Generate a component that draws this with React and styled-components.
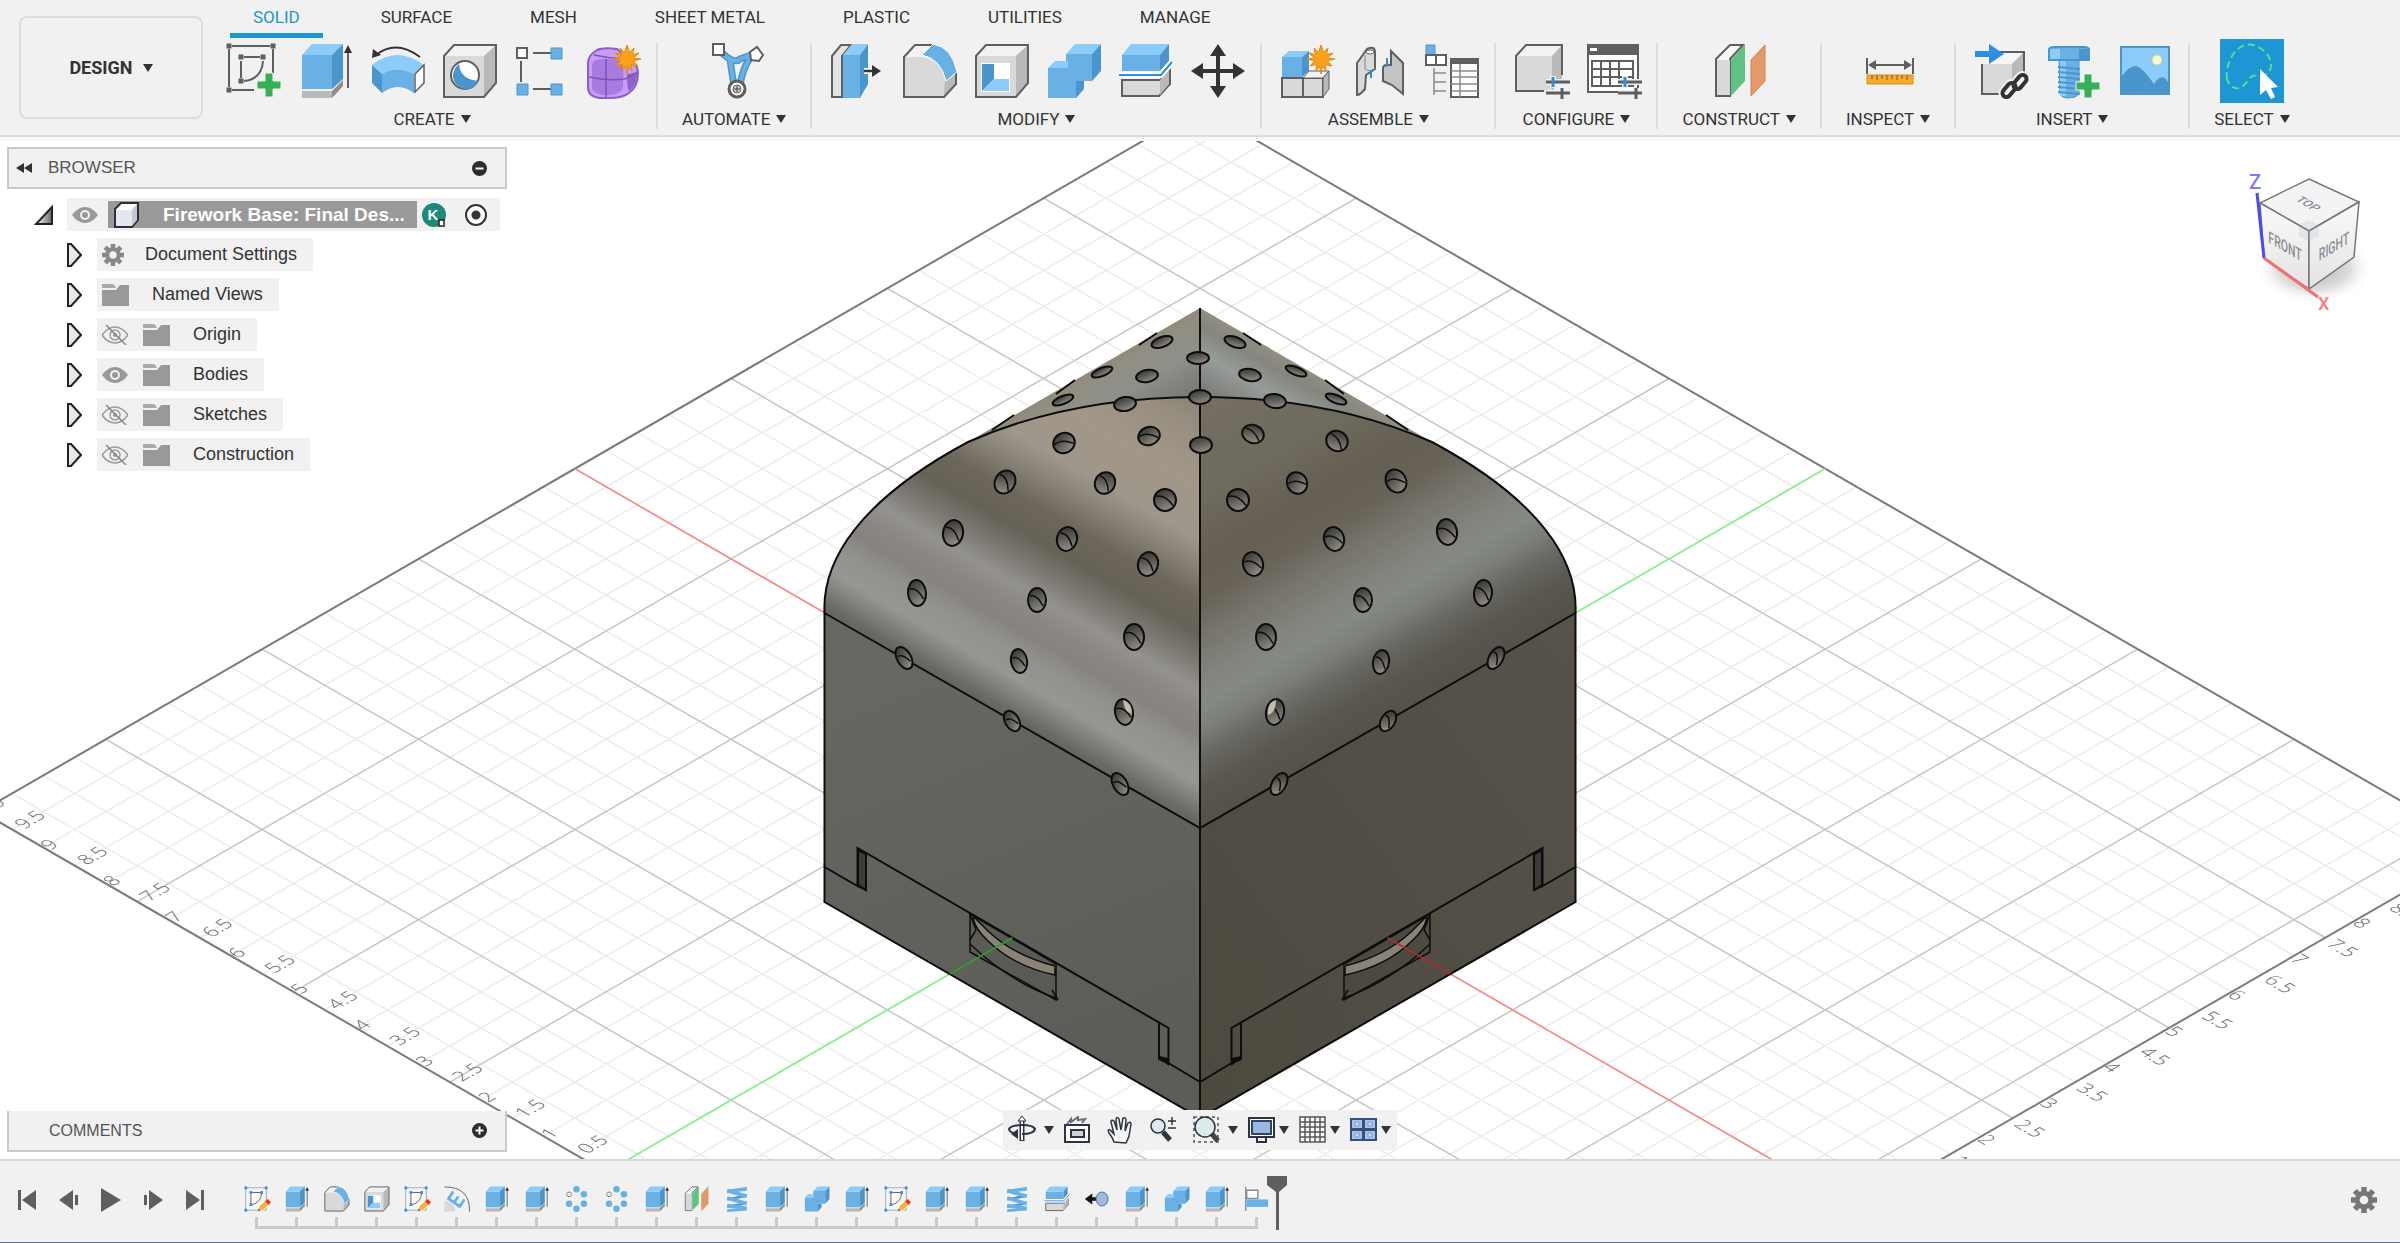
import React from 'react'
import styled, { createGlobalStyle } from 'styled-components'

const GlobalStyle = createGlobalStyle`
  * { box-sizing: border-box; }
  body {
    margin: 0;
    background: #fff;
    color: #333;
    font-family: "Liberation Sans", Arial, sans-serif;
    font-size: 18px;
    overflow: hidden;
  }
  button {
    border: 0;
    padding: 0;
    background: none;
    color: inherit;
    font: inherit;
  }
  svg { display: block; flex: none; }
`

const Page = styled.div`
  display: flex;
  flex-direction: column;
  height: 100vh;
`

/* ---------- toolbar ---------- */

const Header = styled.header`
  display: flex;
  height: 141px;
  flex: none;
  background: #f1f1f1;
  border-bottom: 4px solid #f8f8f8;
  box-shadow: inset 0 -2px #dcdcdc;
  font-family: Roboto, sans-serif;
  font-size: 17px;
  line-height: 20px;
`

const Workspace = styled.button`
  display: flex;
  align-items: center;
  justify-content: center;
  gap: 10px;
  width: 184px;
  height: 103px;
  margin: 16px 0 0 19px;
  border: 2px solid #dcdcdc;
  border-radius: 8px;
  font-size: 18px;
  font-weight: 700;
`

const Ribbon = styled.div`
  flex: 1;
  min-width: 0;
`

const Tabs = styled.nav`
  display: flex;
  gap: 38px;
  height: 43px;
  padding-left: 27px;
`

const Tab = styled.button`
  height: 38px;
  padding: 0 ${(p) => (p.$active ? 23 : 20)}px;
  border-bottom: 5px solid ${(p) => (p.$active ? '#1c97d4' : 'transparent')};
  color: ${(p) => (p.$active ? '#1c97d4' : '#333')};
`

const Groups = styled.div`
  display: flex;
  padding-left: 5px;
`

const Group = styled.section`
  display: flex;
  flex-direction: column;
  align-items: center;
  justify-content: space-between;
  height: 86px;
  padding: 0 16px;
  border-right: 2px solid ${(p) => (p.$last ? 'transparent' : '#dcdcdc')};
`

const Tools = styled.div`
  display: flex;
  gap: 16px;
`

const SelectTool = styled.button`
  margin-top: -4px;
  background: #1c97d4;
`

const GroupLabel = styled.button`
  display: flex;
  align-items: center;
  gap: 6px;
  padding: 0 8px;
`

const Caret = () => (
  <svg width="10" height="8" viewBox="0 0 10 8">
    <path d="M0 0h10L5 8z" fill="#333" />
  </svg>
)

/* ---------- viewport ---------- */

const Viewport = styled.main`
  display: grid;
  flex: 1;
  min-height: 0;
  grid-template: minmax(0, 1fr) / minmax(0, 1fr);
  overflow: hidden;
  > * { grid-area: 1 / 1; }
`

const Canvas = styled.svg`
  width: 100%;
  height: 100%;
`

const BrowserPanel = styled.aside`
  align-self: start;
  width: 500px;
  margin: 6px 0 0 7px;
`

const PanelHead = styled.div`
  display: flex;
  align-items: center;
  height: 42px;
  padding: 0 18px 0 7px;
  border: 2px solid #cacaca;
  background: #f1f1f1;
  color: #555;
  font-size: 17px;
`

const PanelTitle = styled.h2`
  flex: 1;
  margin: 0 0 0 16px;
  font-size: inherit;
  font-weight: 400;
`

const CommentsPanel = styled(PanelHead)`
  align-self: end;
  width: 500px;
  height: 41px;
  margin: 0 0 7px 7px;
  border-top: 0;
  font-size: 16px;
  ${PanelTitle} { margin-left: 33px; }
`

const Tree = styled.ul`
  display: flex;
  flex-direction: column;
  gap: 7px;
  margin: 9px 0 0;
  padding: 0;
  list-style: none;
`

const TreeRow = styled.li`
  display: flex;
  align-items: center;
  gap: ${(p) => (p.$root ? 14 : 15)}px;
  height: 33px;
  padding-left: ${(p) => (p.$root ? 27 : 60)}px;
`

const TreeItem = styled.div`
  display: flex;
  align-items: center;
  gap: 15px;
  height: 33px;
  padding: 0 16px 0 5px;
  background: #f1f1f1;
`

const RootItem = styled(TreeItem)`
  flex: 1;
  gap: 5px;
  margin-right: 7px;
  padding-right: 13px;
`

const TreeText = styled.span`
  padding-left: ${(p) => (p.$folder ? 8 : 6)}px;
`

const RootName = styled.div`
  display: flex;
  align-items: center;
  gap: 24px;
  width: 309px;
  height: 27px;
  margin-left: 5px;
  padding-left: 6px;
  background: #999;
  color: #fff;
  font-size: 19px;
  font-weight: 700;
  white-space: nowrap;
`

const Active = styled.input`
  appearance: none;
  width: 22px;
  height: 22px;
  margin: 0 0 0 auto;
  border: 2px solid #333;
  border-radius: 50%;
  background: radial-gradient(circle, #333 4px, #fff 5px);
`

const NavCube = styled.svg`
  justify-self: end;
  margin: 23px 17px 0 0;
  font-family: Roboto, sans-serif;
`

const NavBar = styled.nav`
  display: flex;
  align-items: center;
  align-self: end;
  justify-self: center;
  gap: 9px;
  height: 40px;
  margin-bottom: 9px;
  padding: 0 6px 0 5px;
  background: #f1f1f1;
`

const NavTool = styled.button`
  display: flex;
  align-items: center;
  gap: ${(p) => (p.$wide ? 8 : 4)}px;
  padding-right: ${(p) => (p.$plain ? 6 : 0)}px;
`

/* ---------- timeline ---------- */

const Timeline = styled.footer`
  display: flex;
  align-items: flex-start;
  flex: none;
  height: 84px;
  border-top: 2px solid #d8d8d8;
  border-bottom: 1px solid #5f7391;
  background: #f1f1f1;
`

const Playback = styled.div`
  display: flex;
  gap: 20px;
  padding: 28px 0 0 16px;
`

const Features = styled.ol`
  display: flex;
  margin: 0;
  padding: 25px 0 0 30px;
  list-style: none;
`

const Feature = styled.li`
  display: flex;
  flex-direction: column;
  align-items: center;
  gap: 5px;
  width: 40px;
`

// the tick under a feature, with the piece of rail that joins it to its neighbours
const Tick = styled.i`
  width: 40px;
  height: 12px;
  background:
    linear-gradient(#c9c9c9, #c9c9c9) center top / 3px 12px no-repeat,
    linear-gradient(#c9c9c9, #c9c9c9) ${(p) => (p.$end === 'first' ? 'right' : 'left')} bottom / ${(p) => (p.$end ? '21px' : '40px')} 3px no-repeat;
`

const Marker = styled.svg`
  margin: 15px 0 0 -10px;
`

const Settings = styled.button`
  margin: 26px 23px 0 auto;
`

/* ---------- icons ---------- */

const B = '#69b1e4'
const BL = '#8bccfa'
const BD = '#4a96cc'
const LINE = { stroke: '#5f5f5f', strokeWidth: 2, fill: 'none' }
const STAR = 'M0-14 2.500-6.500 7-11 5.500-4.500 12-6 6.500-1 14 0 6.500 2 11 7 4.500 5.500 5 12 1.500 7 0 15-1.500 7-5 12-4.500 5.500-11 7-6.500 2-14 0-6.500-1-12-6-5.500-4.500-7-11-2.500-6.500z'

const Star = ({ x, y }) => <path transform={`translate(${x} ${y})`} d={STAR} fill="#f9a11d" stroke="#e08a10" />
const Plus = ({ x, y }) => (
  <path transform={`translate(${x} ${y})`} d="M-4-12h8v8h8v8h-8v8h-8v-8h-8v-8h8z" fill="#34b157" stroke="#f1f1f1" strokeWidth="1" />
)
const Handle = ({ x, y, fill = '#5f5f5f', s = 5 }) => <rect x={x - s / 2} y={y - s / 2} width={s} height={s} fill={fill} />

const GreyBox = () => (
  <>
    <path d="M2 13 12 2h42v38L42 54H2z" fill="#d9d9d9" />
    <path d="M2 13 12 2h42L42 13z" fill="#f2f2f2" />
    <path d="M42 13 54 2v38L42 54z" fill="#b9b9b9" />
    <path d="M2 13 12 2h42v38L42 54H2z" {...LINE} />
  </>
)

const icons = {
  sketch: (
    <>
      <path d="M6 3h38M3 6v38M6 47h22M47 6v24" {...LINE} />
      <path d="M15 18v17M18 14h16M37 18q-1 18-19 20" {...LINE} />
      <Handle x={3} y={3} /><Handle x={47} y={3} /><Handle x={3} y={47} />
      <Handle x={15} y={14} /><Handle x={37} y={14} /><Handle x={15} y={38} />
      <Plus x={43} y={42} />
    </>
  ),
  sketchEdit: (
    <>
      <path d="M4 4h44v48H4z" fill="#f8f8f8" stroke="#a0a0a0" strokeWidth="2" />
      <path d="M15 18v20M18 14h18M38 16q-2 20-20 24" {...LINE} />
      <Handle x={4} y={4} fill="#2c8fe0" s={6} /><Handle x={48} y={4} fill="#2c8fe0" s={6} /><Handle x={4} y={52} fill="#2c8fe0" s={6} />
      <Handle x={15} y={14} fill="#2c8fe0" s={6} /><Handle x={38} y={14} fill="#2c8fe0" s={6} /><Handle x={15} y={40} fill="#2c8fe0" s={6} />
      <path d="m29 55 4-12 13-12 9 9-13 12z" fill="#f7b13c" stroke="#fff" strokeWidth="2" />
      <path d="m29 55 2-7 5 5z" fill="#777" /><path d="m46 33 5-5 7 7-5 6z" fill="#ee2b2b" />
    </>
  ),
  extrude: (
    <>
      <path d="M4 48h30v7H4z" fill="#b9b9b9" /><path d="m34 48 11-11v6L34 55z" fill="#8d8d8d" />
      <path d="M4 12h30v34H4z" fill={B} />
      <path d="M4 12 14 1h31L34 12z" fill={BL} />
      <path d="M34 12 45 1v35L34 46z" fill={BD} />
      <path d="M50 6v39" stroke="#333" strokeWidth="1.500" /><path d="m50 2 4 8h-8z" fill="#333" />
    </>
  ),
  revolve: (
    <>
      <path d="M2 22Q27 2 54 22L44 31Q27 22 12 31z" fill={BL} />
      <path d="M12 31q15-9 32 0v19q-16-12-32 0z" fill={B} />
      <path d="m2 22 10 9v19L2 40z" fill={BD} />
      <path d="m45 31 9-9v18l-9 9z" fill="#fff" stroke="#5f5f5f" strokeWidth="1.500" />
      <path d="M6 12Q26-4 50 14" stroke="#333" strokeWidth="2" fill="none" /><path d="m2 15 1-9 8 6z" fill="#333" />
    </>
  ),
  hole: (
    <>
      <GreyBox />
      <circle cx="23" cy="32" r="14" fill="#fff" stroke="#5f5f5f" strokeWidth="2" />
      <path d="M17 21q1 15 19 17a13 13 0 0 1-25-4q0-9 6-13z" fill={BD} />
    </>
  ),
  pattern: (
    <>
      <path d="M19 10h20M7 18v21M19 46h20" {...LINE} />
      <rect x="3" y="5" width="10" height="10" fill="#fff" stroke="#5f5f5f" strokeWidth="2" />
      <path d="M37 5h11v11H37zM3 41h11v11H3zM37 41h11v11H37z" fill={B} stroke={BD} />
    </>
  ),
  form: (
    <>
      <path d="M2 20Q2 12 11 7q6-3 20-1l14 12q7 4 7 12 0 14-9 20-6 5-20 5H14Q2 54 2 44z" fill="#c99cf5" stroke="#8c5fc4" strokeWidth="2" />
      <path d="M6 22q0-6 12-6 15 0 18 4 2 4 1 24-2 8-16 8-12 0-15-6z" fill="#a87be0" />
      <path d="M41 31q9-1 10-3 1 12-7 20-3 0-3-17z" fill="#8f64c8" />
      <path d="M3 34q18 4 36 2l12-6M20 16v38M8 12q14 3 28 4l6 6" fill="none" stroke="#7e52b5" strokeWidth="1.500" />
      <Star x={41} y={16} />
    </>
  ),
  automate: (
    <>
      <path d="M12 8q14 14 20 8 8-3 14-5M22 17l4 26M42 15q-8 12-10 28" fill="none" stroke={BD} strokeWidth="7" />
      <path d="M12 8q14 14 20 8 8-3 14-5M22 17l4 26M42 15q-8 12-10 28" fill="none" stroke={B} strokeWidth="4" />
      <path d="M5 1h11v11H5zM42 9l7-5 6 8-4 6-8-1z" fill="#fff" stroke="#5f5f5f" strokeWidth="2" />
      <circle cx="29" cy="46" r="8" fill="#fff" stroke="#5f5f5f" strokeWidth="3" />
      <circle cx="29" cy="46" r="4" fill="#ccc" stroke="#5f5f5f" /><path d="M29 43v6M26 46h6" stroke="#444" />
    </>
  ),
  pressPull: (
    <>
      <path d="M2 13 11 2h10L12 13v41H2z" fill="#e4e4e4" stroke="#5f5f5f" strokeWidth="2" />
      <path d="M13 12h17v43H13z" fill={B} /><path d="M13 12 22 1h16l-8 11z" fill={BL} /><path d="m30 12 8-11v40L30 55z" fill={BD} />
      <path d="M34 28h14" stroke="#fff" strokeWidth="6" /><path d="M34 28h11" stroke="#333" strokeWidth="2.500" /><path d="m42 22 9 6-9 6z" fill="#333" />
    </>
  ),
  fillet: (
    <>
      <path d="M2 14 13 2h15L19 14q20 2 25 22l10-10v15L42 54H2z" fill="#d9d9d9" />
      <path d="M2 14 13 2h15L20 14z" fill="#f3f3f3" /><path d="m43 36 11-9v14L42 54z" fill="#b9b9b9" />
      <path d="M54 27v14L42 54H2V14L13 2h18" {...LINE} />
      <path d="M31 1q19 3 24 28l-11 9Q39 16 20 12z" fill={B} stroke="#fff" />
    </>
  ),
  shell: (
    <>
      <GreyBox />
      <path d="M7 20h29v29H7z" fill="#fff" /><path d="M8 21h12v15L8 48z" fill={BD} /><path d="M20 36h15v12H8z" fill={BL} />
    </>
  ),
  combine: (
    <>
      <path d="M2 25h18V11h26v27H30v17H2z" fill={B} />
      <path d="m2 25 7-7h13v7zM20 11l9-10h26l-9 10z" fill={BL} />
      <path d="m46 11 9-10v27l-9 10H38v8l-8 9V38h16z" fill={BD} />
    </>
  ),
  split: (
    <>
      <path d="M4 12h38v16H4z" fill={B} /><path d="m4 12 9-11h38l-9 11z" fill={BL} /><path d="m42 12 9-11v17L42 28z" fill={BD} />
      <path d="M4 37h38l10-10v14L41 53H4z" fill="#d9d9d9" stroke="#5f5f5f" strokeWidth="2" /><path d="m42 37 9-10v14l-9 11z" fill="#b9b9b9" />
      <path d="M1 32h42l11-13" fill="none" stroke="#fff" strokeWidth="6" /><path d="M1 32h42l11-13" fill="none" stroke="#2c8fe0" strokeWidth="2" />
    </>
  ),
  move: (
    <>
      <path d="M28 8v40M8 28h40" stroke="#333" strokeWidth="4" />
      <path d="m28 1 8 12H20zM28 55l8-12H20zM1 28l12-8v16zM55 28l-12-8v16z" fill="#333" />
    </>
  ),
  component: (
    <>
      <path d="M2 35h21v19H2zM23 35h20v19H23z" fill="#d9d9d9" stroke="#5f5f5f" strokeWidth="2" />
      <path d="m23 35 6-7h20l-6 7z" fill="#f3f3f3" stroke="#5f5f5f" /><path d="m43 35 6-7v18l-6 8z" fill="#b9b9b9" stroke="#5f5f5f" />
      <path d="M2 14h20v20H2z" fill={B} /><path d="m2 14 7-6h20l-7 6z" fill={BL} /><path d="m22 14 7-6v20l-7 6z" fill={BD} />
      <Star x={41} y={16} />
    </>
  ),
  joint: (
    <>
      <path d="M5 20 15 6q8-4 8 4v16l-9 6-1 14q-5 6-8 6z" fill="#d9d9d9" stroke="#5f5f5f" strokeWidth="2" />
      <path d="M39 8l12 12v31l-11-9-9-4V25q0-4 8-3z" fill="#c4c4c4" stroke="#5f5f5f" strokeWidth="2" />
      <path d="M13 12v14q5 4 10-1" fill="none" stroke="#8a8a8a" /><ellipse cx="18" cy="9" rx="4" ry="2" fill="#fff" stroke="#5f5f5f" />
      <path d="M19 27v8M35 15v9" stroke="#2c8fe0" strokeWidth="2" />
    </>
  ),
  asBuilt: (
    <>
      <path d="M2 2h9v10H2z" fill={B} stroke={BD} /><path d="M2 12h10v10H2zM12 12h10v10H12z" fill="#fff" stroke="#5f5f5f" strokeWidth="2" />
      <path d="M10 25v27M10 30h12M10 39h12M10 48h12" stroke="#8a8a8a" strokeWidth="1.500" />
      <path d="M27 16h27v38H27z" fill="#fff" stroke="#5f5f5f" strokeWidth="2" /><path d="M27 15h27v6H27z" fill="#5f5f5f" />
      <path d="M27 28h27M27 34h27M27 41h27M27 48h27M36 21v33" stroke="#8a8a8a" strokeWidth="1.500" />
    </>
  ),
  configure: (
    <>
      <path d="M2 13 12 2h36v35L36 48H2z" fill="#d9d9d9" /><path d="M2 13 12 2h36L38 13z" fill="#f2f2f2" /><path d="M38 13 48 2v34L38 48z" fill="#b9b9b9" />
      <path d="M48 32V2H12L2 13v35h28" {...LINE} />
      <path d="M32 39h24M32 50h24M39 33v12M48 45v11" stroke="#f1f1f1" strokeWidth="6" />
      <path d="M32 39h24M32 50h24M48 45v11" stroke="#5f5f5f" strokeWidth="3" /><path d="M39 34v10" stroke="#2c8fe0" strokeWidth="3" />
    </>
  ),
  configTable: (
    <>
      <path d="M2 2h50v47H2z" fill="#fff" stroke="#5f5f5f" strokeWidth="2" /><path d="M1 1h52v11H1z" fill="#5f5f5f" /><path d="M4 5h7v3H4z" fill="#fff" />
      <path d="M6 18h41v25H6zM6 26h41M6 34h41M15 18v25M24 18v25M33 18v25" {...LINE} />
      <path d="M32 39h24M32 50h24M39 33v12M50 45v11" stroke="#f1f1f1" strokeWidth="6" />
      <path d="M32 39h24M32 50h24M50 45v11" stroke="#5f5f5f" strokeWidth="3" /><path d="M39 34v10" stroke="#2c8fe0" strokeWidth="3" />
    </>
  ),
  construct: (
    <>
      <path d="M3 16 17 2h13L17 16v37H3z" fill="#f8f8f8" stroke="#5f5f5f" strokeWidth="2" /><path d="M4 17h13v35H4z" fill="#d9d9d9" />
      <path d="M18 17 32 1v37L18 53z" fill="#5fc383" /><path d="M38 17 52 2v36L38 53z" fill="#e29a6a" stroke="#cf824f" />
    </>
  ),
  measure: (
    <>
      <path d="M5 15v16M51 15v16M8 22h40" {...LINE} /><path d="m6 22 8-5v10zM50 22l-8-5v10z" fill="#5f5f5f" />
      <path d="M5 32h46v9H5z" fill="#f9a92b" stroke="#db8c12" /><path d="M10 32v4M15 32v5M20 32v4M25 32v5M30 32v4M35 32v5M40 32v4M45 32v5" stroke="#5f5f5f" />
    </>
  ),
  insertLink: (
    <>
      <path d="M8 21 18 9h32v30L38 51H8z" fill="#d9d9d9" /><path d="M8 21 18 9h32L38 21z" fill="#f6f6f6" /><path d="M38 21 50 9v30L38 51z" fill="#b9b9b9" />
      <path d="M50 32V9H24M8 21v30h20" {...LINE} />
      <path d="M1 8h14V1l15 10-15 10v-7H1z" fill="#2c8fe0" />
      <g fill="none" stroke="#f1f1f1" strokeWidth="8"><rect x="-8" y="-4" width="16" height="8" rx="4" transform="translate(46 39) rotate(-50)" /><rect x="-8" y="-4" width="16" height="8" rx="4" transform="translate(35 47) rotate(-50)" /></g>
      <g fill="none" stroke="#333" strokeWidth="4"><rect x="-8" y="-4" width="16" height="8" rx="4" transform="translate(46 39) rotate(-50)" /><rect x="-8" y="-4" width="16" height="8" rx="4" transform="translate(35 47) rotate(-50)" /></g>
    </>
  ),
  bolt: (
    <>
      <path d="M13 15h20v36q-3 4-10 4t-9-4z" fill={B} stroke={BD} /><path d="M14 16h6v37h-6z" fill={BL} />
      <path d="m12 24 22 2M12 29l22 2M12 34l22 2M12 39l22 2M12 44l22 2M12 49l22 2" stroke={BD} strokeWidth="2" />
      <path d="M3 6q1-2 5-2h30q4 0 5 2v11H3z" fill={B} stroke={BD} strokeWidth="2" /><path d="M4 6h10v10H4z" fill={BL} /><path d="M33 6h9v10h-9z" fill={BD} />
      <Plus x={42} y={43} />
    </>
  ),
  picture: (
    <>
      <path d="M3 4h48v47H3z" fill={BL} stroke="#4a96cc" strokeWidth="2" />
      <path d="M3 34Q12 22 18 23t18 18q6-10 12-5l3 5v10H3z" fill="#4a96cc" /><circle cx="39" cy="17" r="5" fill="#fdfad0" stroke="#c5d48a" />
    </>
  ),
  emboss: (
    <>
      <path d="M1 32q22 2 24 23H1z" fill="#d9d9d9" /><path d="M1 2q56 0 54 53" {...LINE} />
      <path d="m20 12-10 15 24 17 10-15M22 35l9-12" fill="none" stroke={B} strokeWidth="6" />
    </>
  ),
  circular: (
    <>
      <circle cx="11" cy="18" r="5" fill="#fff" stroke="#777" strokeWidth="2" />
      {[[27, 7], [43, 18], [43, 38], [27, 49], [11, 38]].map(([x, y]) => <circle key={x + y * 100} cx={x} cy={y} r="7" fill={B} />)}
    </>
  ),
  coil: (
    <>
      <path d="M49 5 7 13M49 21 7 29M49 37 7 45" stroke={BD} strokeWidth="5" />
      <path d="m7 10 42 12M7 26l42 12M7 42l42 6" stroke={B} strokeWidth="8" /><path d="M49 2v8L7 15v-7zM49 46v7L7 56v-6z" fill={B} />
    </>
  ),
  moveBody: (
    <>
      <path d="M2 28 18 16v8h10v8H18v8z" fill="#111" /><ellipse cx="39" cy="28" rx="13" ry="15" fill="#9db9dd" stroke="#55698a" strokeWidth="2" />
    </>
  ),
  align: (
    <>
      <path d="M4 2v52" stroke="#8a8a8a" strokeWidth="3" /><path d="M6 9h24v18H6z" fill="#fff" stroke="#8a8a8a" strokeWidth="3" />
      <path d="M6 29h46v16H6z" fill={B} />
    </>
  ),
}

const Icon = ({ name, size = 56 }) => (
  <svg width={size} height={size} viewBox="-2 0 56 56" overflow="visible">{icons[name]}</svg>
)

const Eye = ({ off }) => (
  <svg width="26" height="20" viewBox="0 0 26 20">
    <path d="M0 10q6-8 13-8t13 8q-6 8-13 8T0 10z" fill={off ? 'none' : '#999'} stroke="#999" strokeWidth={off ? 1.500 : 0} />
    <circle cx="13" cy="10" r="5" fill={off ? 'none' : '#f1f1f1'} stroke="#999" strokeWidth={off ? 1.500 : 0} />
    <circle cx="13" cy="10" r={off ? 2 : 3} fill="#999" />
    {off && <path d="m4 0 20 20" stroke="#888" strokeWidth="1.500" />}
  </svg>
)

const Folder = () => (
  <svg width="27" height="24" viewBox="0 0 27 24">
    <path d="M0 1h11l3 3-1 1H0z" fill="#aaa" /><path d="M0 7h14l4-5h9v21H0z" fill="#999" />
  </svg>
)

const Gear = ({ size, fill = '#888' }) => (
  <svg width={size} height={size} viewBox="0 0 24 24" fill={fill}>
    {[0, 45, 90, 135].map((a) => <path key={a} d="M9.500 0h5v24h-5z" transform={`rotate(${a} 12 12)`} />)}
    <circle cx="12" cy="12" r="8.500" />
    <circle cx="12" cy="12" r="4" fill="#f1f1f1" />
  </svg>
)

const Expander = () => (
  <svg width="15" height="24" viewBox="0 0 15 24">
    <path d="M1 1h3l10 11L4 23H1z" fill="#e6e8ec" stroke="#222" strokeWidth="2" />
  </svg>
)

const Round = ({ plus }) => (
  <svg width="15" height="15" viewBox="0 0 15 15">
    <circle cx="7.500" cy="7.500" r="7.500" fill="#2d2d2d" />
    <path d={plus ? 'M3.500 7.500h8M7.500 3.500v8' : 'M3.500 7.500h8'} stroke="#fff" strokeWidth="2" />
  </svg>
)

/* ---------- model canvas ---------- */

const pt = (u, v) => [1200 + 156.3 * (u - v), 829.5 + 90.2 * (u + v)]
const seg = (u1, v1, u2, v2) => `M${pt(u1, v1).join(' ')}L${pt(u2, v2).join(' ')}`
const U = [-20, 21]
const V = [-20, 19]

const gridLines = (major) => {
  let d = ''
  for (let i = U[0]; i <= U[1]; i++) if ((i % 5 === 0) === major) d += seg(i / 5, V[0] / 5, i / 5, V[1] / 5)
  for (let i = V[0]; i <= V[1]; i++) if ((i % 5 === 0) === major) d += seg(U[0] / 5, i / 5, U[1] / 5, i / 5)
  return d
}

const rulerLabels = () => {
  const out = []
  for (let i = 1; i <= 20; i++) {
    const inset = i % 2 ? 7 : 1
    const left = pt(-i / 5, V[1] / 5)
    const right = pt(U[1] / 5, -i / 5)
    out.push(<text key={`l${i}`} x={inset} y="7" transform={`matrix(.866 -.5 .866 .5 ${left.join(' ')})`}>{i / 2}</text>)
    // the right ruler only comes into view from 1.5 up to 8.5
    if (i > 2 && i < 18) {
      out.push(<text key={`r${i}`} x={inset} y="7" transform={`matrix(.866 .5 -.866 .5 ${right.join(' ')})`}>{i / 2}</text>)
    }
  }
  return out
}

// cx, cy, rx, ry, tilt
const holes = [
  [1162, 342, 11, 5, -20], [1235, 342, 11, 5, 20], [1198, 358, 11, 6, 0],
  [1102, 372, 11, 4, -22], [1147, 376, 11, 6, -10], [1250, 375, 11, 6, 10], [1296, 371, 11, 4, 22],
  [1063, 400, 11, 4, -22], [1336, 399, 11, 4, 22], [1125, 404, 11, 7, -8], [1200, 397, 11, 7, 0], [1275, 401, 11, 7, 8],
  [1064, 443, 11, 10, -30], [1149, 436, 11, 9, -20], [1201, 445, 11, 8, 0], [1253, 434, 11, 9, 20], [1337, 441, 11, 10, 30],
  [1005, 482, 10, 12, 30], [1105, 483, 10, 11, 30], [1165, 500, 11, 11, 0], [1238, 500, 11, 11, 0], [1297, 483, 10, 11, -30], [1396, 481, 10, 12, -30],
  [953, 533, 10, 13, 10], [1067, 539, 10, 12, 15], [1148, 564, 10, 12, 15], [1253, 564, 10, 12, -15], [1334, 539, 10, 12, -15], [1447, 532, 10, 13, -10],
  [917, 593, 9, 13, -5], [1037, 600, 9, 12, 0], [1134, 637, 10, 13, 0], [1266, 637, 10, 13, 0], [1363, 600, 9, 12, 0], [1483, 593, 9, 13, 5],
  [904, 658, 7, 12, -30], [1019, 661, 8, 12, -10], [1124, 712, 9, 13, -10], [1275, 712, 9, 13, 10], [1381, 662, 8, 12, 10], [1496, 658, 7, 12, 30],
  [1012, 721, 7, 11, -30], [1120, 784, 7, 12, -30], [1279, 784, 7, 12, 30], [1388, 721, 7, 11, 30],
]

const bands = {
  left: [[400, '#8a8377'], [430, '#978e81'], [480, '#a29787'], [540, '#9f978c'], [565, '#8a8479'], [600, '#6c665b'], [635, '#676257'], [665, '#7d7a74'], [690, '#94928d'], [715, '#8a8783'], [735, '#878480'], [760, '#93938d'], [785, '#969790'], [805, '#7e7f79'], [820, '#6a6b65'], [828, '#64655f']],
  right: [[400, '#766f62'], [450, '#716c60'], [500, '#6f6a5e'], [560, '#665f53'], [600, '#686257'], [640, '#77756d'], [680, '#82847d'], [705, '#868a84'], [730, '#7d807a'], [760, '#676660'], [790, '#595750'], [828, '#555149']],
}

const Bands = ({ id, x2, stops }) => (
  <linearGradient id={id} gradientUnits="userSpaceOnUse" x1="1200" y1="400" x2={x2} y2="721">
    {stops.map(([y, c]) => <stop key={y} offset={(y - 400) / 428} stopColor={c} />)}
  </linearGradient>
)

const SideDetail = () => (
  <g fill="none" stroke="#0d0d0d" strokeWidth="2">
    <path d="M824.500 867l33 19V848l311 180v35l31.500 19M858 886l8 4v-37" />
    <path d="M858 850l8 4v36l-8-5z" fill="#3c3b37" />
    <path d="M1159 1023v36l9 4" /><path d="M1159 1057l9 2v5z" fill="#0d0d0d" />
    <path d="M970 914v38l86 48v-36z" fill="#000" fillOpacity=".05" strokeWidth="1.500" />
    <path d="M973 918q3 12 14 22 26 26 68 35v-9q-40-10-66-34l-14-14z" fill="#8a8377" strokeWidth="1.500" />
    <path d="M970 944q40 38 86 54M970 914l6 16-6 10M1052 990l6 10" strokeWidth="1.500" />
  </g>
)

const Model = () => (
  <Canvas viewBox="0 141 2400 1018" preserveAspectRatio="xMidYMid slice">
    <defs>
      <Bands id="roofLeft" x2="1014.800" stops={bands.left} />
      <Bands id="roofRight" x2="1385.200" stops={bands.right} />
      <linearGradient id="capLeft" gradientUnits="userSpaceOnUse" x1="1200" y1="308" x2="1239" y2="376">
        <stop offset="0" stopColor="#8f8a7a" /><stop offset=".15" stopColor="#928f83" /><stop offset=".45" stopColor="#8d908b" /><stop offset=".7" stopColor="#82827e" /><stop offset="1" stopColor="#79756f" />
      </linearGradient>
      <linearGradient id="capRight" gradientUnits="userSpaceOnUse" x1="1200" y1="308" x2="1161" y2="376">
        <stop offset="0" stopColor="#928e80" /><stop offset=".2" stopColor="#858680" /><stop offset=".5" stopColor="#969c98" /><stop offset=".75" stopColor="#858884" /><stop offset="1" stopColor="#77746d" />
      </linearGradient>
      <linearGradient id="wallLeft" x1="0" y1="0" x2=".3" y2="1"><stop offset="0" stopColor="#686963" /><stop offset="1" stopColor="#5d5d57" /></linearGradient>
      <linearGradient id="wallRight" x1="1" y1="0" x2="0" y2="1"><stop offset="0" stopColor="#57534b" /><stop offset="1" stopColor="#4d493f" /></linearGradient>
      <linearGradient id="hole" x1="0" y1="0" x2=".4" y2="1"><stop offset="0" stopColor="#2f2e2b" /><stop offset=".45" stopColor="#55534e" /><stop offset="1" stopColor="#8b8881" /></linearGradient>
    </defs>

    <path d={gridLines(false)} stroke="#ececec" strokeWidth="1.500" />
    <path d={gridLines(true)} stroke="#c6c6c6" strokeWidth="1.500" />
    <path d={`M${pt(-4, -4)}L${pt(4.200, -4)}L${pt(4.200, 3.800)}L${pt(-4, 3.800)}z`} fill="none" stroke="#7c7c7c" strokeWidth="2" />
    <g fontFamily="Open Sans, sans-serif" fontSize="19" fontWeight="300" fill="#666">{rulerLabels()}</g>
    <path d={seg(-4, 0, 4.200, 0)} stroke="#ff8585" strokeWidth="1.500" />
    <path d={seg(0, -4, 0, 3.800)} stroke="#7dfa7d" strokeWidth="1.500" />

    <path d="M1200 308 968 442 1200 442z" fill="url(#capLeft)" />
    <path d="M1200 308 1432 442 1200 442z" fill="url(#capRight)" />
    <path d="M824.500 613C822 560 860 500 968 442Q1070 397 1200 397V828z" fill="url(#roofLeft)" />
    <path d="M1575.500 613C1578 560 1540 500 1432 442Q1330 397 1200 397V828z" fill="url(#roofRight)" />
    <path d="M824.500 613 1200 828v290L824.500 902z" fill="url(#wallLeft)" />
    <path d="M1575.500 613 1200 828v290l375.500-216z" fill="url(#wallRight)" />
    <g fill="none" stroke="#0d0d0d" strokeWidth="2">
      <path d="M824.500 902V613C822 560 860 500 968 442Q1070 397 1200 397T1432 442C1540 500 1578 560 1575.500 613V902L1200 1118z" />
      <path d="M824.500 613 1200 828l375.500-215M1200 308v810" />
      <path d="M1139 345l18-12M1056 394l19-14M992 430l22-15M1243 333l18 12M1325 380l19 14M1386 415l22 15" />
    </g>
    <SideDetail />
    <g transform="translate(2400 0) scale(-1 1)"><SideDetail /></g>
    {holes.map(([x, y, rx, ry, a]) => (
      <g key={`${x}-${y}`} transform={`translate(${x} ${y}) rotate(${a})`} stroke="#0d0d0d">
        <ellipse rx={rx} ry={ry} fill="url(#hole)" strokeWidth="2" />
        {ry > 8 && <path d={`M${-rx + 2} ${-ry / 3}Q0 ${-ry / 2} ${rx - 3} ${ry / 2}`} fill="none" strokeWidth="1.500" />}
      </g>
    ))}
    <path d="M1123 700q9 2 9 14-8-2-9-14zM1276 700q-9 2-8 15 8-2 8-15z" fill="#c4bbab" />
    <path d={seg(1.200, 0, 1.600, 0)} stroke="#b52a26" strokeWidth="1.500" />
    <path d={seg(0, 1.200, 0, 1.600)} stroke="#29a32c" strokeWidth="1.500" />
  </Canvas>
)

const ViewCube = () => (
  <NavCube width="150" height="160" viewBox="2233 164 150 160">
    <defs>
      <radialGradient id="cubeShadow"><stop offset="0" stopColor="#888" stopOpacity=".7" /><stop offset=".6" stopColor="#aaa" stopOpacity=".4" /><stop offset="1" stopColor="#fff" stopOpacity="0" /></radialGradient>
      <linearGradient id="cubeFace" x1="0" y1="0" x2="0" y2="1"><stop offset="0" stopColor="#fafafa" /><stop offset="1" stopColor="#e3e3e4" /></linearGradient>
    </defs>
    <ellipse cx="2314" cy="268" rx="60" ry="36" fill="url(#cubeShadow)" />
    <g stroke="#777" strokeWidth="1.500">
      <path d="M2309 179 2359 202 2309 231 2260 203z" fill="#f3f3f4" />
      <path d="M2260 203 2309 231V289L2264 258z" fill="url(#cubeFace)" />
      <path d="M2309 231 2359 202 2354 257 2309 289z" fill="url(#cubeFace)" />
    </g>
    <path d="M2299 224l10-4 10 5v11l-10 5-10-5z" fill="#9fb0c4" opacity=".2" />
    <g fill="#8a8f96" fontSize="15" fontWeight="500" textAnchor="middle">
      <text transform="matrix(.7 .4 -.7 .4 2306 205)" y="2">TOP</text>
      <text transform="matrix(.7 .4 0 1.100 2285 252)">FRONT</text>
      <text transform="matrix(.7 -.42 0 1.100 2334 252)">RIGHT</text>
    </g>
    <path d="M2257 193 2264 258" stroke="#4b4bf2" strokeWidth="3" />
    <path d="M2264 258 2318 297" stroke="#f07070" strokeWidth="3" />
    <text x="2249" y="189" fontSize="20" fontWeight="500" fill="#7c7cff">Z</text>
    <text x="2318" y="310" fontSize="18" fontWeight="500" fill="#ff7a7a">X</text>
  </NavCube>
)

const navTools = [
  { label: 'Orbit', caret: true, wide: true, art: <><path d="M14 3v22" stroke="#2b3440" strokeWidth="5" /><path d="M14 4v20" stroke="#fff" strokeWidth="2" /><path d="m14 0 4 5h-8z" fill="#fff" stroke="#2b3440" /><path d="M8 18Q1 16 1 13q2-4 13-4t13 4q-1 5-13 5" fill="none" stroke="#2b3440" strokeWidth="2" /><path d="m3 18 7-5v10z" fill="#2b3440" /></> },
  { label: 'Look at', art: <><path d="M2 9h24v17H2z" fill="#fff" stroke="#2b3440" strokeWidth="2" /><path d="M8 14h13v7H8z" fill="#ccd2da" stroke="#2b3440" strokeWidth="2" /><path d="m4 8 4-5v3l7-5v3l7-1-3 4" fill="none" stroke="#66707c" strokeWidth="2" /></> },
  { label: 'Pan', art: <path d="M8 26q-1-4-5-9-2-4 1-3l4 4L5 6q0-3 3-1l3 9-1-11q1-3 3 0l2 11 2-12q3-1 3 2l-1 11 3-8q3-2 3 1l-2 12q-1 3-3 7z" fill="#f8f8f8" stroke="#2b3440" strokeWidth="1.500" /> },
  { label: 'Zoom', art: <><path d="m14 16 7 8" stroke="#2b3440" strokeWidth="5" /><circle cx="9" cy="10" r="7" fill="#dcecec" stroke="#2b3440" strokeWidth="1.500" /><path d="M19 5h8M23 1v8M19 12h8" stroke="#2b3440" strokeWidth="1.500" /></> },
  { label: 'Fit', caret: true, wide: true, art: <><path d="M2 1h24v25H2z" fill="none" stroke="#555" strokeWidth="1.500" strokeDasharray="3 3" /><path d="m19 17 7 8" stroke="#444" strokeWidth="5" /><circle cx="13" cy="11" r="10" fill="#dcecec" stroke="#2b3440" strokeWidth="1.500" /></> },
  { label: 'Display settings', caret: true, art: <><path d="M2 2h25v19H2z" fill="#fff" stroke="#2b3440" strokeWidth="2" /><path d="M5 5h19v13H5z" fill="#9bb8e0" stroke="#2f4468" strokeWidth="2" /><path d="M10 22v4h9v-4" fill="none" stroke="#2b3440" strokeWidth="2" /></> },
  { label: 'Grid and snaps', caret: true, art: <><path d="M2 1h25v25H2z" fill="#fff" /><path d="M2 1h25v25H2zM7 1v25M12 1v25M17 1v25M22 1v25M2 6h25M2 11h25M2 16h25M2 21h25" fill="none" stroke="#555" strokeWidth="1.500" /></> },
  { label: 'Viewports', caret: true, art: <><path d="M2 3h12v10H2zM15 3h12v10H15zM2 14h12v10H2zM15 14h12v10H15z" fill="#a9c1e6" stroke="#33507f" strokeWidth="2" /><path d="M6 6h4v4H6zM19 6h4v4h-4zM6 17h4v4H6zM19 17h4v4h-4z" fill="#c8d8f0" stroke="#7f9dcb" /></> },
]

const groups = [
  { label: 'CREATE', tools: ['sketch', 'extrude', 'revolve', 'hole', 'pattern', 'form'] },
  { label: 'AUTOMATE', tools: ['automate'] },
  { label: 'MODIFY', tools: ['pressPull', 'fillet', 'shell', 'combine', 'split', 'move'] },
  { label: 'ASSEMBLE', tools: ['component', 'joint', 'asBuilt'] },
  { label: 'CONFIGURE', tools: ['configure', 'configTable'] },
  { label: 'CONSTRUCT', tools: ['construct'] },
  { label: 'INSPECT', tools: ['measure'] },
  { label: 'INSERT', tools: ['insertLink', 'bolt', 'picture'] },
]

const tabs = ['SOLID', 'SURFACE', 'MESH', 'SHEET METAL', 'PLASTIC', 'UTILITIES', 'MANAGE']

const nodes = [
  { name: 'Document Settings', gear: true },
  { name: 'Named Views' },
  { name: 'Origin', eye: 'off' },
  { name: 'Bodies', eye: 'on' },
  { name: 'Sketches', eye: 'off' },
  { name: 'Construction', eye: 'off' },
]

const features = [
  'sketchEdit', 'extrude', 'fillet', 'shell', 'sketchEdit', 'emboss', 'extrude', 'extrude', 'circular', 'circular',
  'extrude', 'construct', 'coil', 'extrude', 'combine', 'extrude', 'sketchEdit', 'extrude', 'extrude', 'coil',
  'split', 'moveBody', 'extrude', 'combine', 'extrude', 'align',
]

const playback = [
  ['Go to start', 'M2 1h3v20H2zM20 1v20L6 11z'],
  ['Step back', 'M15 1v20L1 11zM17 6h3v10h-3z'],
  ['Play', 'M1-1v24l20-12z'],
  ['Step forward', 'M7 1v20l14-10zM2 6h3v10H2z'],
  ['Go to end', 'M17 1h3v20h-3zM2 1v20l14-10z'],
]

const App = () => {
  return (
    <Page>
      <GlobalStyle />
      <Header>
        <Workspace>DESIGN <Caret /></Workspace>
        <Ribbon>
          <Tabs>
            {tabs.map((t, i) => <Tab key={t} $active={i === 0}>{t}</Tab>)}
          </Tabs>
          <Groups>
            {groups.map((g) => (
              <Group key={g.label}>
                <Tools>
                  {g.tools.map((t) => <button key={t} aria-label={t}><Icon name={t} /></button>)}
                </Tools>
                <GroupLabel>{g.label} <Caret /></GroupLabel>
              </Group>
            ))}
            <Group $last>
              <SelectTool aria-label="select">
                <svg width="64" height="64" viewBox="0 0 64 64">
                  <path d="M7 40Q5 28 14 14 24 2 36 7q15 7 15 20-1 10-12 9-8 0-11 5-6 10-13 8-6-2-8-9z" fill="none" stroke="#5fdc86" strokeWidth="2" strokeDasharray="7 4" />
                  <path d="M40 30v26l6-5 5 9 4-2-4-9 7-1z" fill="#fff" />
                </svg>
              </SelectTool>
              <GroupLabel>SELECT <Caret /></GroupLabel>
            </Group>
          </Groups>
        </Ribbon>
      </Header>

      <Viewport>
        <Model />
        <BrowserPanel>
          <PanelHead>
            <svg width="16" height="12" viewBox="0 0 16 12"><path d="M8 1v10L0 6zM16 1v10L8 6z" fill="#333" /></svg>
            <PanelTitle>BROWSER</PanelTitle>
            <button aria-label="Collapse"><Round /></button>
          </PanelHead>
          <Tree>
            <TreeRow $root>
              <svg width="19" height="20" viewBox="0 0 19 20">
                <defs><linearGradient id="open"><stop offset="0" stopColor="#fff" /><stop offset="1" stopColor="#666" /></linearGradient></defs>
                <path d="M18 2v17H2z" fill="url(#open)" stroke="#222" strokeWidth="2" />
              </svg>
              <RootItem>
                <Eye />
                <RootName>
                  <svg width="25" height="26" viewBox="0 0 25 26">
                    <path d="M1 7 7 1h17v17l-6 7H1z" fill="#fff" stroke="#2b2f3a" strokeWidth="2" /><path d="M2 8h16v16H2z" fill="#e4e7ee" /><path d="m18 8 5-6v16l-5 6z" fill="#c3c7d2" />
                  </svg>
                  Firework Base: Final Des...
                </RootName>
                <svg width="24" height="24" viewBox="0 0 24 24">
                  <circle cx="12" cy="12" r="12" fill="#1c8a7b" />
                  <text x="11" y="17" fontSize="15" fontWeight="700" fill="#fff" textAnchor="middle">K</text>
                  <path d="M17 17h5v6h-5z" fill="#fff" stroke="#222" strokeWidth="1.500" />
                </svg>
                <Active type="radio" aria-label="Activate component" defaultChecked />
              </RootItem>
            </TreeRow>
            {nodes.map((n) => (
              <TreeRow key={n.name}>
                <Expander />
                <TreeItem>
                  {n.eye && <Eye off={n.eye === 'off'} />}
                  {n.gear ? <Gear size={22} /> : <Folder />}
                  <TreeText $folder={!n.gear}>{n.name}</TreeText>
                </TreeItem>
              </TreeRow>
            ))}
          </Tree>
        </BrowserPanel>
        <ViewCube />
        <CommentsPanel>
          <PanelTitle>COMMENTS</PanelTitle>
          <button aria-label="Add comment"><Round plus /></button>
        </CommentsPanel>
        <NavBar>
          {navTools.map((t) => (
            <NavTool key={t.label} aria-label={t.label} $wide={t.wide} $plain={!t.caret}>
              <svg width="28" height="28" viewBox="0 0 28 28">{t.art}</svg>
              {t.caret && <Caret />}
            </NavTool>
          ))}
        </NavBar>
      </Viewport>

      <Timeline>
        <Playback>
          {playback.map(([label, d]) => (
            <button key={label} aria-label={label}>
              <svg width="22" height="22" viewBox="0 0 22 22" overflow="visible"><path d={d} fill="#5f5f5f" /></svg>
            </button>
          ))}
        </Playback>
        <Features>
          {features.map((f, i) => (
            <Feature key={i}>
              <Icon name={f} size={26} />
              <Tick $end={i === 0 ? 'first' : i === features.length - 1 ? 'last' : undefined} />
            </Feature>
          ))}
        </Features>
        <Marker width="22" height="54" viewBox="0 0 22 54">
          <path d="M1 0h20v9l-8 7v38h-3V16L1 9z" fill="#5f5f5f" />
        </Marker>
        <Settings aria-label="Timeline settings"><Gear size={26} fill="#777" /></Settings>
      </Timeline>
    </Page>
  )
}

export default App
